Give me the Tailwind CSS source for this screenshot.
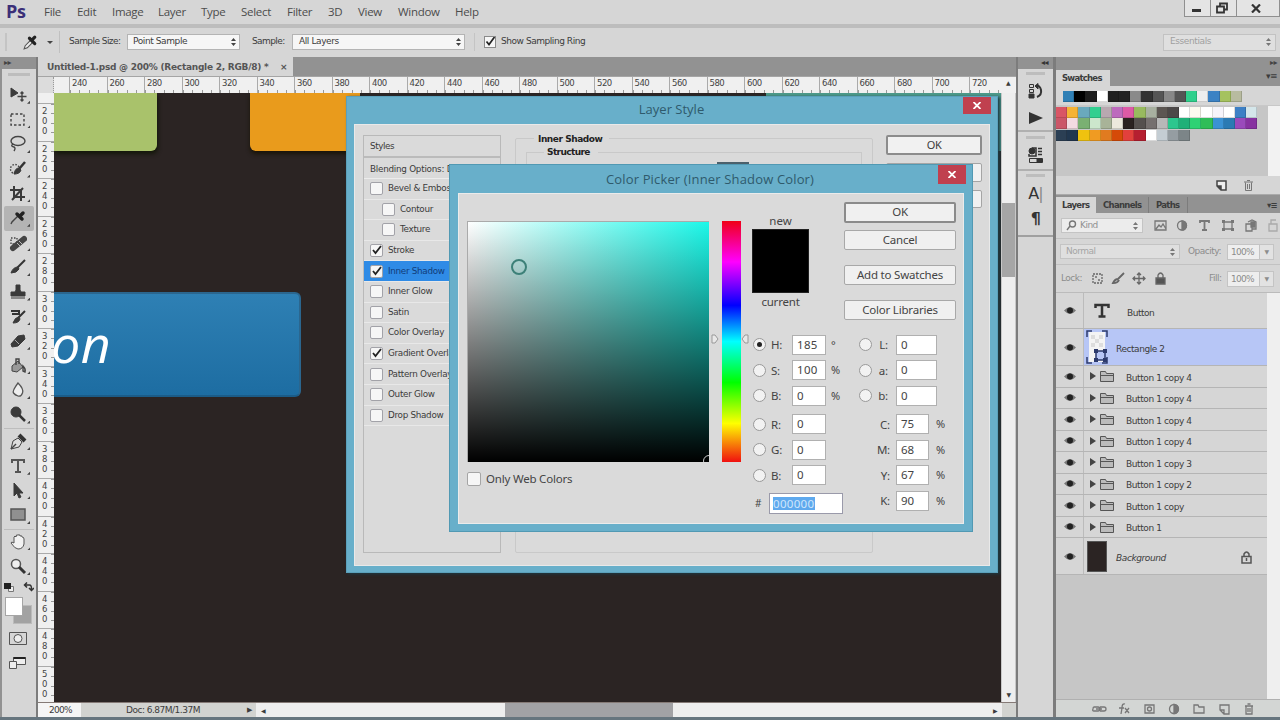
<!DOCTYPE html>
<html lang="en" class="h-full">
<head>
  <meta charset="UTF-8" />
  <title>Photoshop - Untitled-1.psd</title>
  <script src="https://cdn.jsdelivr.net/npm/@tailwindcss/browser@4"></script>
</head>
<body class="w-[1280px] h-[720px] overflow-hidden bg-[#d6d6d6] flex flex-col font-['DejaVu_Sans',sans-serif] text-[9px] tracking-[-0.5px] text-[#3c3c3c] whitespace-nowrap">

  <!-- Menu bar -->
  <header class="h-[28px] shrink-0 border-b-4 border-[#bdbdbd] flex">
    <div class="w-[44px] pl-[6px] font-['Open_Sans',sans-serif] text-[18px] font-bold leading-[22px] tracking-[-0.4px] text-[#3b2f78]">Ps</div>
    <nav class="flex font-['Open_Sans',sans-serif] text-[11.5px] tracking-[-0.3px] leading-[24px] text-[#4c4c4c]">
      <span class="w-[33px]">File</span>
      <span class="w-[35px]">Edit</span>
      <span class="w-[46px]">Image</span>
      <span class="w-[43px]">Layer</span>
      <span class="w-[40px]">Type</span>
      <span class="w-[46px]">Select</span>
      <span class="w-[41px]">Filter</span>
      <span class="w-[30px]">3D</span>
      <span class="w-[40px]">View</span>
      <span class="w-[57px]">Window</span>
      <span>Help</span>
    </nav>
    <div class="ml-auto w-[96px] h-[17px] flex border border-t-0 border-[#8f8f8f] bg-[#e4e4e4] text-[#333]">
      <div class="w-[26px] flex justify-center pt-[9px] pr-[3px] border-r border-[#8f8f8f]"><div class="w-[9px] h-[3px] bg-[#333]"></div></div>
      <div class="w-[26px] grid place-items-center pr-[3px] border-r border-[#8f8f8f]">
        <svg width="12" height="12" viewBox="0 0 12 12" fill="none" stroke="#333" stroke-width="1.8"><path d="M4 4V1.5h7v6H8M1 4.5h7v6H1z"/></svg>
      </div>
      <div class="flex-1 grid place-items-center pr-[4px]">
        <svg width="10" height="9" viewBox="0 0 10 9" stroke="#333" stroke-width="2.2"><path d="M1 .5l8 8M9 .5l-8 8"/></svg>
      </div>
    </div>
  </header>

  <!-- Options bar -->
  <div class="h-[29px] shrink-0 flex items-center pb-px text-[9px]">
    <div class="ml-[5px] w-[2px] h-[18px] bg-[#c4c4c4]"></div>
    <svg class="ml-[15px]" width="17" height="17" viewBox="0 0 16 16"><path d="M2 14l1-3 5-5 2 2-5 5z" fill="#eee" stroke="#555"/><path d="M7 4l5 5M9 6l3-3" stroke="#222" stroke-width="3" stroke-linecap="round"/></svg>
    <span class="ml-[8px] border-x-[3px] border-x-transparent border-t-[3px] border-t-[#444]"></span>
    <div class="ml-[6px] w-px h-[22px] bg-[#c0c0c0]"></div>
    <span class="ml-[9px] w-[58px] tracking-[-0.55px]">Sample Size:</span>
    <div class="w-[113px] h-[16px] bg-[#f6f6f6] border border-[#b4b4b4] flex items-center justify-between pl-[5px] pr-[3px]"><span class="tracking-[-0.4px]">Point Sample</span><svg width="5" height="8" viewBox="0 0 5 8" fill="#444"><path d="M0 3l2.500-3L5 3zM0 5l2.500 3L5 5z"/></svg></div>
    <span class="ml-[12px] w-[40px] tracking-[-0.6px]">Sample:</span>
    <div class="w-[173px] h-[16px] bg-[#f6f6f6] border border-[#b4b4b4] flex items-center justify-between pl-[6px] pr-[3px]"><span class="tracking-[-0.4px]">All Layers</span><svg width="5" height="8" viewBox="0 0 5 8" fill="#444"><path d="M0 3l2.500-3L5 3zM0 5l2.500 3L5 5z"/></svg></div>
    <div class="ml-[9px] w-px h-[18px] bg-[#c4c4c4]"></div>
    <div class="ml-[9px] w-[12px] h-[12px] bg-[#f6f6f6] border border-[#8a8a8a]"><svg width="11" height="10" viewBox="0 0 11 10" fill="none" stroke="#222" stroke-width="1.700"><path d="M1.500 4.500l2.500 3L9.500 0"/></svg></div>
    <span class="ml-[5px] tracking-[-0.45px]">Show Sampling Ring</span>
    <div class="ml-auto mr-[4px] w-[113px] h-[17px] bg-[#dfdfdf] border border-[#c2c2c2] flex items-center justify-between pl-[6px] pr-[4px] text-[#a0a0a0]"><span class="tracking-[-0.4px]">Essentials</span><svg width="5" height="8" viewBox="0 0 5 8" fill="#777"><path d="M0 3l2.500-3L5 3zM0 5l2.500 3L5 5z"/></svg></div>
  </div>

  <div class="h-[660px] shrink-0 flex bg-[#929292]">

    <!-- Toolbox -->
    <aside class="w-[38px] flex flex-col border-r-2 border-[#7c7c7c]">
      <div class="h-[12px] pl-[4px] text-[8px] leading-[11px] text-[#444]">▸▸</div>
      <div class="flex-1 ml-[2px] bg-[#d6d6d6] flex flex-col">
        <div class="mx-[6px] mt-[4px] h-[3px] bg-[#bdbdbd] shrink-0"></div>
        <div id="tools" class="mt-[7px] flex flex-col"></div>
        <div class="h-[15px] mt-[3px] flex justify-between px-[2px] shrink-0">
          <svg width="11" height="11" viewBox="0 0 11 11"><path d="M4.500 4.500h5v5h-5z" fill="#eee" stroke="#777"/><path d="M0 1h7v6H0z" fill="#222"/></svg>
          <svg width="11" height="10" viewBox="0 0 11 10" fill="none" stroke="#333" stroke-width="1.500"><path d="M2.500 3h4q2 0 2 4M4 .5L1.500 3 4 5.500M6 6l2.500 2.500L11 6"/></svg>
        </div>
        <div class="relative h-[31px] shrink-0">
          <div class="absolute left-[11px] top-[8px] w-[19px] h-[19px] bg-[#a2a2a2] border border-[#bbb]"></div>
          <div class="absolute left-[3px] top-0 w-[18px] h-[19px] bg-white border border-[#a5a5a5]"></div>
        </div>
        <div class="h-[22px] grid place-items-center pr-[3px]"><svg width="18" height="13" viewBox="0 0 18 13" fill="none" stroke="#555"><path d="M.5.5h17v12H.5z"/><circle cx="9" cy="6.500" r="4" fill="#eee"/></svg></div>
        <div class="h-[27px] grid place-items-center pr-[3px]"><svg width="19" height="14" viewBox="0 0 19 14" fill="#eee" stroke="#555"><path d="M5.500 1.500h12v7h-12z"/><path d="M5.500 2h12" stroke="#222" stroke-width="2"/><path d="M1.500 5.500h7v7h-7z"/></svg></div>
      </div>
    </aside>

    <!-- Document -->
    <main class="w-[978px] flex flex-col">
      <div class="h-[19px] shrink-0 flex">
        <div class="w-[255px] bg-[#d6d6d6] flex items-center pl-[9px] pt-[2px] font-bold text-[#555] text-[9px] tracking-[-0.25px]"><span class="w-[233px]">Untitled-1.psd @ 200% (Rectangle 2, RGB/8) *</span><span>×</span></div>
      </div>
      <div class="h-[17px] shrink-0 flex bg-[#f0f0f0] border-t border-[#a5a5a5]">
        <div class="w-[16px] bg-[#dcdcdc] border-r border-dotted border-[#999]"></div>
        <div id="ruler-x" class="w-[949px] flex overflow-hidden pl-[15px] text-[8.5px] leading-[13px] text-[#444]"></div>
        <div class="flex-1 pl-[3px] text-[6px] leading-[12px]">▲</div>
      </div>
      <div class="h-[609px] shrink-0 flex">
        <div id="ruler-y" class="w-[16px] bg-[#f0f0f0] overflow-hidden pt-[10px] text-[8.5px] leading-[10px] text-[#444]"></div>
        <section class="relative w-[947px] h-full bg-[#2b2423] overflow-hidden">
          <!-- Artwork on the canvas -->
          <div class="absolute left-0 top-0 w-[103px] h-[58px] rounded-br-[6px] bg-[#a9c26b] shadow-[1px_3px_4px_#14170a]"></div>
          <div class="absolute left-[196px] top-0 w-[110px] h-[58px] rounded-bl-[6px] bg-[#e99b1c] shadow-[0_3px_4px_#1a1408]"></div>
          <div class="absolute right-0 top-0 w-[235px] h-[58px] bg-[#4d9a8b]"></div>
          <div class="absolute left-[-10px] top-[199px] w-[257px] h-[105px] rounded-[6px] border-2 border-[#2b668e] border-b-[#1b5c88] bg-linear-to-b from-[#2e80b4] to-[#1d6da2] pl-[5px] font-['Open_Sans',sans-serif] italic text-[52px] leading-[97px] tracking-[0.5px] text-white">on</div>

          <!-- Layer Style dialog -->
          <div class="absolute left-[292px] top-[3px] w-[652px] h-[477px] bg-[#68afca] border border-[#5ba0bb] shadow-[2px_1px_3px_#1c3a44] px-[7px] pb-[6px] flex flex-col">
            <div class="h-[27px] shrink-0 flex">
              <h2 class="flex-1 pl-[26px] text-center font-['Open_Sans',sans-serif] text-[13px] leading-[24px] tracking-[0px] text-[#2f5a6c]">Layer Style</h2>
              <div class="w-[28px] h-[17px] mr-[-1px] bg-[#c0404f] grid place-items-center"><svg width="8" height="7" viewBox="0 0 8 7" stroke="#fff" stroke-width="1.800"><path d="M.5 0l7 7M7.500 0l-7 7"/></svg></div>
            </div>
            <div class="flex-1 bg-[#dadada] border border-[#e9e9e9] flex pl-[8px] pt-[10px] pb-[12px]">
              <div class="w-[138px] border border-[#b9b9b9] flex flex-col text-[8.8px] text-[#3a3a3a] tracking-[-0.4px]">
                <div class="h-[22px] shrink-0 pl-[6px] leading-[21px] border-b-2 border-[#bbb]">Styles</div>
                <div class="h-[21px] shrink-0 pl-[6px] leading-[22px] tracking-[-0.25px] border-b border-[#ececec]">Blending Options: Default</div>
                <div id="styles" class="flex flex-col"></div>
              </div>
              <div class="ml-[14px] w-[358px] mt-[3px] border border-[#c9c9c9] rounded-[2px] px-[10px]">
                <div class="w-[75px] -mt-[6px] ml-[8px] pl-[4px] bg-[#dadada] font-bold leading-[12px] tracking-[-0.45px] text-[#222]">Inner Shadow</div>
                <div class="mt-[7px] h-[120px] border border-[#c9c9c9]">
                  <div class="w-[54px] -mt-[7px] ml-[17px] pl-[3px] bg-[#dadada] font-bold leading-[12px] tracking-[-0.6px] text-[#222]">Structure</div>
                  <div class="ml-[190px] mt-[4px] w-[32px] h-[16px] bg-[#4b606b]"></div>
                </div>
              </div>
              <div class="ml-[13px] w-[96px] flex flex-col gap-[8px]">
                <div class="h-[20px] bg-[#f1f1f1] border-2 border-[#8c8c8c] rounded-[2px] text-center font-['Noto_Sans',sans-serif] text-[11px] leading-[15px] tracking-[-0.4px]">OK</div>
                <div class="h-[19px] bg-[#f1f1f1] border border-[#a5a5a5] rounded-[2px]"></div>
                <div class="h-[18px] bg-[#f1f1f1] border border-[#a5a5a5] rounded-[2px]"></div>
              </div>
            </div>
          </div>

          <!-- Color Picker dialog -->
          <div class="absolute left-[395px] top-[71px] w-[524px] h-[368px] bg-[#68afca] border border-[#5199b3] px-[8px] pb-[7px] flex flex-col">
            <div class="h-[28px] shrink-0 flex">
              <h2 class="flex-1 pl-[24px] text-center font-['Open_Sans',sans-serif] text-[13px] leading-[28px] tracking-[0.15px] text-[#2f5a6c]">Color Picker (Inner Shadow Color)</h2>
              <div class="w-[28px] h-[19px] mr-[-2px] bg-[#c0404f] grid place-items-center"><svg width="8" height="7" viewBox="0 0 8 7" stroke="#fff" stroke-width="1.800"><path d="M.5 0l7 7M7.500 0l-7 7"/></svg></div>
            </div>
            <div class="flex-1 bg-[#dadada] border border-[#ebebeb] flex font-['Noto_Sans',sans-serif] text-[11.5px] tracking-[-0.2px] text-[#444]">
              <div class="w-[250px] pl-[8px] pt-[27px]">
                <div class="relative w-[242px] h-[241px] border-l border-t border-[#aaa] overflow-hidden bg-[linear-gradient(to_top,#000,transparent),linear-gradient(to_right,#fff,#1cf7e8)]">
                  <svg class="absolute left-[42px] top-[36px]" width="18" height="18" viewBox="0 0 18 18" fill="none" stroke="#3d8078" stroke-width="2"><circle cx="9" cy="9" r="7"/></svg>
                  <div class="absolute left-[235px] top-[233px] w-[12px] h-[12px] rounded-full border border-[#ccc]"></div>
                </div>
                <div class="mt-[9px] flex items-center"><div class="w-[14px] h-[14px] border border-[#a5a5a5] rounded-[2px] bg-[#f6f6f6]"></div><span class="ml-[5px] leading-[16px] tracking-[-0.2px]">Only Web Colors</span></div>
              </div>
              <div class="w-[36px] pt-[27px] relative">
                <div class="ml-[13px] w-[19px] h-[241px] bg-[linear-gradient(to_bottom,#f00016,#f0f_17%,#00f_35%,#0ff_50%,#0f0_67%,#ff0_84%,#f01010)]"></div>
                <svg class="absolute left-[2px] top-[140px]" width="38" height="10" viewBox="0 0 38 10" fill="#e8e8e8" stroke="#999"><path d="M1 1h3l3 4-3 4H1zM37 1h-3l-3 4 3 4h3z"/></svg>
              </div>
              <div class="w-[88px] pt-[19px] flex flex-col">
                <div class="w-[57px] ml-[7px] flex flex-col items-center">
                  <span class="leading-[16px] h-[16px] tracking-[0px]">new</span>
                  <div class="w-[57px] h-[64px] bg-black border border-[#222]"></div>
                  <span class="leading-[18px] tracking-[-0.2px]">current</span>
                </div>
                <div id="hsb" class="ml-[8px] mt-[21px]"></div>
                <div class="flex items-center mt-[5px] ml-[8px]"><span class="w-[9px] shrink-0 mr-[7px] pl-[2px] text-[10px]">#</span>
                  <div class="w-[74px] shrink-0 h-[21px] bg-white border border-[#9a9aaa] p-[3px]"><div class="w-[42px] h-[13px] bg-[#5ea9ee] text-[#cfe6fb] leading-[13px] tracking-[0.3px]">000000</div></div>
                </div>
              </div>
              <div class="w-[123px] pt-[8px] flex flex-col">
                <div class="ml-[11px] w-[112px] text-center leading-[17px] tracking-[-0.2px]">
                  <div class="h-[21px] bg-[#f0f0f0] border-2 border-[#8b8b8b] rounded-[2px] leading-[16px]">OK</div>
                  <div class="mt-[7px] h-[20px] bg-[#f0f0f0] border border-[#a8a8a8] rounded-[2px]">Cancel</div>
                  <div class="mt-[15px] h-[20px] bg-[#f0f0f0] border border-[#a8a8a8] rounded-[2px]">Add to Swatches</div>
                  <div class="mt-[15px] h-[20px] bg-[#f0f0f0] border border-[#a8a8a8] rounded-[2px]">Color Libraries</div>
                </div>
                <div id="lab" class="ml-[26px] mt-[12px]"></div>
              </div>
            </div>
          </div>
        </section>
        <div class="flex-1 bg-[#eeeeee] border-x border-[#c8c8c8] flex flex-col">
          <div class="mt-[110px] h-[74px] bg-[#a6a6a6]"></div>
          <div class="mt-auto text-center text-[6px] leading-[14px]">▼</div>
        </div>
      </div>
      <div class="flex-1 border-t border-[#857a76] bg-[#d2d3d0] flex items-center leading-[15px]">
        <div class="w-[43px] h-full bg-[#f5f5f5] pl-[11px] tracking-[-0.7px]">200%</div>
        <div class="w-[166px] pl-[45px] tracking-[-0.5px]">Doc: 6.87M/1.37M</div>
        <span class="w-[9px] text-[7px]">▶</span>
        <div class="w-[746px] h-full bg-[#eee] flex items-center justify-between px-[5px] text-[6px]"><span>◀</span><div class="w-[168px] h-full bg-[#a2a2a5] mr-[84px] ml-auto"></div><span class="ml-[236px]">▶</span></div>
      </div>
    </main>

    <!-- Collapsed panel strip -->
    <aside class="w-[40px] flex flex-col border-x-2 border-r-3 border-[#7c7c7c] text-[#333]">
      <div class="h-[12px] text-[8px] leading-[11px] text-right pr-[5px] shrink-0">◂◂</div>
      <div class="h-[63px] shrink-0 bg-[#d6d6d6] border-b-2 border-[#b0b0b0] flex flex-col items-center">
        <div class="w-[19px] h-[3px] mt-[3px] bg-[#bdbdbd]"></div>
        <svg class="mt-[8px]" width="16" height="16" viewBox="0 0 16 16" fill="none" stroke="#333"><path d="M1.500 1.500h4v3h-4zM1.500 6.500h4v3h-4z"/><path d="M1 11h5v4H1z" fill="#333"/><path d="M9 14q5-2 4-7t-5-4" stroke-width="2"/><path d="M10 .5L7 3l3 3z" fill="#333"/></svg>
        <svg class="mt-[13px]" width="14" height="12" viewBox="0 0 14 12"><path d="M0 0l14 6-14 6z" fill="#333"/></svg>
      </div>
      <div class="h-[39px] shrink-0 bg-[#d6d6d6] border-b-2 border-[#b0b0b0] flex flex-col items-center">
        <div class="w-[19px] h-[3px] mt-[4px] bg-[#bdbdbd]"></div>
        <svg class="mt-[8px]" width="16" height="17" viewBox="0 0 16 17" fill="none" stroke="#333"><circle cx="4" cy="4" r="3" fill="#333"/><path d="M4 1h4v8H1V7M10 1.500h4M10 4.500h4M10 7.500h4" stroke-width="1.500"/><path d="M1.500 11.500h13v4h-13z"/><path d="M9 12h5v3H9z" fill="#333"/></svg>
      </div>
      <div class="h-[66px] shrink-0 bg-[#d6d6d6] border-b-2 border-[#a0a0a0] flex flex-col items-center">
        <div class="w-[19px] h-[3px] mt-[3px] bg-[#bdbdbd]"></div>
        <div class="mt-[6px] h-[24px] text-[16px] leading-[22px] tracking-[-1px]">A<span class="text-[#888]">|</span></div>
        <div class="text-[16px] leading-[24px] font-bold">¶</div>
      </div>
      <div class="flex-1 bg-[#d6d6d6]"></div>
    </aside>

    <!-- Panels -->
    <aside class="w-[224px] flex flex-col">
      <div class="h-[13px] text-[8px] leading-[11px] text-right pr-[3px] text-[#444] shrink-0">▸▸</div>
      <div class="h-[16px] shrink-0 flex justify-between">
        <span class="w-[54px] bg-[#d6d6d6] pl-[6px] leading-[16px] font-bold text-[8.5px] tracking-[-0.75px]">Swatches</span>
        <span class="pr-[3px] leading-[13px] text-[9px]">▾≡</span>
      </div>
      <div class="h-[20px] shrink-0 bg-[#d6d6d6] pl-[7px] pt-[5px] flex border-b border-[#c8c8c8]" id="recent"></div>
      <div class="h-[70px] shrink-0 flex bg-[#c6c6c6]">
        <div id="swatches" class="flex-1 pt-[1px]"></div>
        <div class="w-[12px] bg-[#f2f2f2]"></div>
      </div>
      <div class="h-[19px] shrink-0 bg-[#d6d6d6] flex items-center justify-end gap-[17px] pr-[27px] border-b border-[#aaa]">
        <svg width="11" height="11" viewBox="0 0 11 11" fill="#eee" stroke="#444" stroke-width="1.500"><path d="M1 1h9v9H5L1 6z"/><path d="M1 6h4v4" fill="#444"/></svg>
        <svg width="9" height="11" viewBox="0 0 9 11" fill="none" stroke="#777"><path d="M0 2h9M3 .5h3M1.500 2.500v8h6v-8M3.500 4v5M5.500 4v5"/></svg>
      </div>
      <div class="h-[18px] pt-[2px] shrink-0 flex font-bold text-[8.500px] leading-[16px] tracking-[-0.7px]">
        <span class="w-[40px] bg-[#d6d6d6] pl-[6px]">Layers</span>
        <span class="w-[53px] pl-[7px] border-r border-[#7c7c7c]">Channels</span>
        <span class="w-[39px] pl-[7px] border-r border-[#7c7c7c]">Paths</span>
        <span class="ml-auto pr-[3px]">▾≡</span>
      </div>
      <div class="h-[26px] shrink-0 bg-[#d6d6d6] border-b border-[#c2c2c2] flex items-center pl-[5px] text-[#909090]">
        <div class="w-[82px] h-[15px] bg-[#ececec] border border-[#c4c4c4] flex items-center px-[4px]">
          <svg width="11" height="11" viewBox="0 0 11 11" fill="none" stroke="#777" stroke-width="1.400"><circle cx="6.500" cy="4" r="3"/><path d="M4 6L1 10"/></svg>
          <span class="ml-[3px]">Kind</span><svg class="ml-auto" width="5" height="8" viewBox="0 0 5 8" fill="#777"><path d="M0 3l2.500-3L5 3zM0 5l2.500 3L5 5z"/></svg>
        </div>
        <svg class="ml-[11px]" width="125" height="13" viewBox="0 0 125 13" fill="none" stroke="#777" stroke-width="1.300">
          <path d="M1 2h11v9H1zM2 10l3-4 2 2 2-3 3 5"/><circle cx="28" cy="6.500" r="4.500"/><path d="M28 2a4.500 4.500 0 0 1 0 9z" fill="#777"/>
          <path d="M46 4V2h9v2M50.500 2v9M48 11h5" stroke-width="1.800"/><path d="M70 3h8v7h-8z"/><path d="M68 1h3v3h-3zM77 1h3v3h-3zM68 9h3v3h-3zM77 9h3v3h-3z" fill="#777" stroke="none"/>
          <path d="M92 5h6v7h-6zM94 3l4-2 4 2v7h-4"/><path d="M97 3h4v5h-4z" fill="#777"/><path d="M115 5h8v7h-8zM117 5V1h5" stroke="#aaa"/>
        </svg>
      </div>
      <div class="h-[26px] shrink-0 bg-[#d6d6d6] border-b border-[#c2c2c2] flex items-center pl-[4px] text-[#8c8c8c]">
        <div class="w-[120px] h-[15px] bg-[#dfdfdf] border border-[#c4c4c4] flex items-center justify-between pl-[5px] pr-[4px] text-[#a5a5a5]"><span>Normal</span><svg width="5" height="8" viewBox="0 0 5 8" fill="#777"><path d="M0 3l2.500-3L5 3zM0 5l2.500 3L5 5z"/></svg></div>
        <span class="w-[39px] ml-[8px]">Opacity:</span>
        <div class="w-[33px] h-[16px] bg-[#eee] border border-[#c4c4c4] pl-[3px] leading-[14px] tracking-[-0.7px]">100%</div>
        <div class="w-[14px] h-[16px] bg-[#e2e2e2] border border-l-0 border-[#c4c4c4] grid place-items-center text-[6px]">▼</div>
      </div>
      <div class="h-[28px] shrink-0 bg-[#d6d6d6] border-b border-[#bbb] flex items-center pl-[5px] text-[#8c8c8c]">
        <span class="w-[30px]">Lock:</span>
        <svg width="75" height="13" viewBox="0 0 75 13" fill="none" stroke="#666" stroke-width="1.300"><path d="M2 2h9v9H2z" stroke-dasharray="2 1"/><path d="M4 4h2v2H4zM7 7h2v2H7z" fill="#888" stroke="none"/><path d="M33 1l-7 7M27 7q-3 0-5 4 5 0 6-3" stroke-width="1.800"/><path d="M48 1v11M42 6.500h12M46 3l2-2 2 2M46 10l2 2 2-2M44 4.500l-2 2 2 2M52 4.500l2 2-2 2"/><path d="M65 6h9v6h-9z" fill="#555"/><path d="M67 6V3q2.500-4 5 0v3"/></svg>
        <span class="w-[18px] ml-auto">Fill:</span>
        <div class="w-[33px] h-[16px] bg-[#eee] border border-[#c4c4c4] pl-[3px] leading-[14px] tracking-[-0.7px]">100%</div>
        <div class="w-[14px] h-[16px] mr-[6px] bg-[#e2e2e2] border border-l-0 border-[#c4c4c4] grid place-items-center text-[6px]">▼</div>
      </div>
      <div class="h-[407px] shrink-0 flex bg-[#c6c6c6] border-b border-[#b0b0b0]">
        <div id="layers" class="w-[211px] flex flex-col"></div>
        <div class="flex-1 bg-[#efefef]"></div>
      </div>
      <div class="flex-1 bg-[#d3d6d4] flex items-center justify-center pl-[9px]">
        <svg width="162" height="12" viewBox="0 0 162 12" fill="none" stroke="#777" stroke-width="1.300">
          <path d="M2 4h4q2 0 2 2t-2 2H2q-2 0-1-2 0-2 1-2zM8 4h4q2 0 2 2t-2 2H8M4 6h6"/>
          <path d="M33 1q-3-1-3 4l-1 6M27 5h5M33 5l4 5M37 5l-4 5"/>
          <path d="M53 2h9v8h-9z"/><circle cx="57.500" cy="6" r="2"/>
          <circle cx="82" cy="6" r="4.500"/><path d="M82 1.500a4.500 4.500 0 0 1 0 9z" fill="#777"/>
          <path d="M102 10V2h4l1 2h5v6z"/><path d="M128 2h9v9h-5l-4-4zM128 7h4v4"/>
          <path d="M153 3h8M155.500 1h3M154 3v8h6V3M156 5v4M158 5v4"/>
        </svg>
      </div>
    </aside>
  </div>

  <footer class="flex-1 bg-[#66757e]"></footer>

  <script>
    const dark = 'fill="#3a3a3a" stroke="#3a3a3a"';
    const line = 'fill="none" stroke="#444" stroke-width="1.4"';
    const tools = [
      `<path d="M2 2l7 5-7 4z" ${dark}/><path d="M13 6v9M8.500 10.500h9M11.500 7.500L13 6l1.500 1.500M11.500 13.500L13 15l1.500-1.500" ${line}/>`,
      `<path d="M2 3h13v11H2z" ${line} stroke-dasharray="2.500 2"/>`,
      `<ellipse cx="9" cy="6" rx="7" ry="4.500" ${line}/><path d="M4 9q-3 2 1 3 2 1 0 4" ${line}/>`,
      `<circle cx="6" cy="9" r="4.500" ${line} stroke-dasharray="1.500 1.500"/><path d="M16 2l-6 7" fill="none" stroke="#333" stroke-width="2.500"/><path d="M10 8q-4 0-5 6 6 0 7-4z" ${dark}/>`,
      `<path d="M5 1v11h11M1 5h11v11M3 15L14 3" fill="none" stroke="#3a3a3a" stroke-width="2"/>`,
      `<path d="M2 15l1-2 6-6" ${line}/><path d="M8 5l5 5M11 7l3-3" stroke="#222" stroke-width="3.500" stroke-linecap="round"/>`,
      `<path d="M2 4h6v6H2z" ${line} stroke-dasharray="1.500 1.500"/><path d="M4 14L15 5" stroke="#444" stroke-width="6" stroke-linecap="round"/><path d="M8 9l3 3M10 7l3 3" stroke="#bbb"/>`,
      `<path d="M16 2l-8 8" fill="none" stroke="#333" stroke-width="2"/><path d="M9 9q-5 0-7 6 6 0 8-4z" ${dark}/>`,
      `<path d="M7 2h4v5l1 2h4v4H2V9h4l1-2zM2 15h14" ${dark}/>`,
      `<path d="M2 3h8v3H3M16 3l-7 7" fill="none" stroke="#333" stroke-width="2"/><path d="M10 9q-4 0-6 6 6 0 7-4z" ${dark}/>`,
      `<path d="M2 12l7-8 6-1 1 4-7 7-6 1z" ${dark}/><path d="M6 8l4 4" stroke="#aaa"/>`,
      `<path d="M3 9l6-5 5 6-6 5-5-1z" fill="#999" stroke="#444"/><path d="M7 8V2h3v5M14 9q3 3 2 6l-2-1z" ${line}/>`,
      `<path d="M9 2q6 6 4.500 10T9 15t-4.500-3T9 2z" fill="#eee" stroke="#555" stroke-width="1.300"/>`,
      `<circle cx="7" cy="6" r="5" ${dark}/><path d="M10 9l6 6" fill="none" stroke="#333" stroke-width="2.500"/>`,
      null,
      `<path d="M2 16l2-8 5-3 4 4-3 5z" fill="#ddd" stroke="#444"/><path d="M2 16l5-5" ${line}/><path d="M10 2l6 6" stroke="#333" stroke-width="4"/>`,
      `<path d="M3 6V3h12v3M9 3v12M6 15h6" fill="none" stroke="#555" stroke-width="2"/>`,
      `<path d="M5 1v13l3-3 2 5 2-1-2-4h4z" ${dark}/>`,
      `<path d="M2 3h14v11H2z" fill="#909090" stroke="#555" stroke-width="1.500"/>`,
      null,
      `<path d="M5 9V4q1-2 2 0 0-3 2-2 2-1 2 1 2-1 2 1 2 0 2 2v5q-1 5-6 5-3 0-7-6 0-2 3 0z" fill="#f2f2f2" stroke="#555"/>`,
      `<circle cx="7" cy="6" r="4.500" fill="#eee" stroke="#555" stroke-width="1.500"/><path d="M10 9l6 6" fill="none" stroke="#333" stroke-width="3"/>`,
    ];
    document.getElementById('tools').innerHTML = tools.map((icon, i) => {
      if (!icon) return '<div class="h-px mt-px shrink-0 bg-[#bdbdbd] mx-[2px]"></div>';
      const box = i === 5 ? 'bg-[#b4b4b4]' : '';
      return `<div class="h-[24.6px] shrink-0 mx-[2px] rounded-[2px] flex items-center pl-[5px] ${box}">
        <svg width="18" height="18" viewBox="0 0 18 18">${icon}</svg>
        <span class="mt-[14px] w-[3px] h-[3px] bg-[#444] [clip-path:polygon(100%_0,100%_100%,0_100%)]"></span></div>`;
    }).join('');

    // Rulers: one numbered cell every 20 units
    let rx = '', ry = '';
    for (let n = 240; n <= 720; n += 20) {
      rx += `<div class="w-[37.5px] shrink-0 h-full border-l border-[#aaa] pl-[2px] relative">${n}<div class="absolute left-0 bottom-0 w-full h-[3px] bg-[repeating-linear-gradient(to_right,#999_0,#999_1px,transparent_1px,transparent_9.4px)]"></div></div>`;
    }
    for (let n = 200; n <= 500; n += 20) {
      ry += `<div class="h-[37.5px] border-t border-[#aaa] pl-[4px] pt-[2px] relative">${String(n).split('').join('<br>')}<div class="absolute right-0 top-0 w-[3px] h-full bg-[repeating-linear-gradient(to_bottom,#999_0,#999_1px,transparent_1px,transparent_9.4px)]"></div></div>`;
    }
    document.getElementById('ruler-x').innerHTML = rx;
    document.getElementById('ruler-y').innerHTML = ry;

    const check = '<svg width="12" height="11" viewBox="0 0 12 11" fill="none" stroke="#222" stroke-width="1.8"><path d="M2 5l2.500 3L10 1"/></svg>';
    const styles = [
      ['Bevel & Emboss', 0, 0], ['Contour', 1, 0], ['Texture', 1, 0], ['Stroke', 0, 1], ['Inner Shadow', 0, 1],
      ['Inner Glow', 0, 0], ['Satin', 0, 0], ['Color Overlay', 0, 0], ['Gradient Overlay', 0, 1],
      ['Pattern Overlay', 0, 0], ['Outer Glow', 0, 0], ['Drop Shadow', 0, 0],
    ];
    document.getElementById('styles').innerHTML = styles.map(([name, sub, on]) => `
      <div class="h-[20.6px] flex items-center border-b border-[#e8e8e8] ${sub ? 'pl-[18px]' : 'pl-[6px]'} ${name === 'Inner Shadow' ? 'bg-[#2f8be6] text-[#123c78]' : ''}">
        <div class="w-[13px] h-[13px] shrink-0 bg-[#f6f6f6] border border-[#a2a2a8] rounded-[2px]">${on ? check : ''}</div>
        <span class="ml-[5px] tracking-[-0.3px]">${name}</span>
      </div>`).join('');

    function radio(on) {
      return `<div class="w-[13px] h-[13px] shrink-0 rounded-full border border-[#999] bg-[#f2f2f2] grid place-items-center">${on ? '<div class="w-[5px] h-[5px] rounded-full bg-[#222]"></div>' : ''}</div>`;
    }
    const hsb = [['H', 185, '°'], ['S', 100, '%'], ['B', 0, '%'], ['R', 0, ''], ['G', 0, ''], ['B', 0, '']];
    document.getElementById('hsb').innerHTML = hsb.map(([k, v, unit], i) => `
      <div class="h-[25.5px] flex items-center ${i === 3 ? 'mt-[3px]' : ''}">${radio(i === 0)}
        <span class="w-[20px] ml-[5px] mr-px shrink-0">${k}:</span>
        <div class="w-[34px] h-[20px] shrink-0 bg-white border border-[#b0b0b0] pl-[4px] leading-[18px] tracking-[0.3px]">${v}</div>
        <span class="ml-[5px] text-[11px]">${unit}</span></div>`).join('');

    const lab = [['L', 0], ['a', 0], ['b', 0], ['C', 75], ['M', 68], ['Y', 67], ['K', 90]];
    document.getElementById('lab').innerHTML = lab.map(([k, v], i) => `
      <div class="h-[25.5px] flex items-center ${i === 3 ? 'mt-[3px]' : ''}">${i < 3 ? radio(false) : '<div class="w-[13px] shrink-0"></div>'}
        <span class="${i < 3 ? 'w-[16px] mr-[2px]' : 'w-[18px]'} shrink-0 text-right">${k}:</span>
        <div class="${i < 3 ? 'w-[41px]' : 'w-[33px]'} h-[20px] ml-[6px] shrink-0 bg-white border border-[#b0b0b0] pl-[4px] leading-[18px] tracking-[-0.1px]">${v}</div>
        <span class="ml-[7px] text-[11px]">${i < 3 ? '' : '%'}</span></div>`).join('');

    function swatchRow(colors) {
      return colors.split(' ').map(c => `<div class="w-[11.2px] h-[11px] shrink-0 border-r border-b border-black/15" style="background:#${c}"></div>`).join('');
    }
    document.getElementById('recent').innerHTML = swatchRow('2f7fb5 000 1c1c1c fff 1f1f1f 222 8a8a8a 333 555 888 555 2fd08c eee 3c82c4 a5c25f b8bba0');
    document.getElementById('swatches').innerHTML = [
      'd95565 f5b335 6aa9bd 32cf8f b8a8b0 bd6abd dd5aa6 98ba5f a8b0a0 5c5652 4c4848 fff fdfbf0 fff f6f4fa fff 3d80c5 d4e6ea',
      'cb5668 f3dbe2 7ab072 cce6cc a8b398 ece9dc 2a2220 55504e 76706f b8b8b8 2cc78e 1fb078 2fd274 2fbd58 3a92d4 2a7ab3 9a4abb 8732a0',
      '2b3f54 21374f efc20f f09b22 e07b20 d54a08 e2403c b61f30 fff c4cdd3 959da2 7c8588',
    ].map(r => `<div class="flex h-[11.3px]">${swatchRow(r)}</div>`).join('');

    const eye = '<div class="w-[28px] h-full shrink-0 grid place-items-center border-r border-[#bbb]"><svg width="12" height="9" viewBox="0 0 12 9"><path d="M0 4.500q6-7 12 0-6 7-12 0z" fill="#777"/><circle cx="6" cy="4.500" r="3" fill="#222"/></svg></div>';
    const groups = ['Button 1 copy 4', 'Button 1 copy 4', 'Button 1 copy 4', 'Button 1 copy 4', 'Button 1 copy 3', 'Button 1 copy 2', 'Button 1 copy', 'Button 1'];
    document.getElementById('layers').innerHTML = `
      <div class="h-[36px] shrink-0 flex items-center bg-[#d6d6d6] border-b border-[#b5b5b5]">${eye}
        <svg class="ml-[10px]" width="16" height="15" viewBox="0 0 16 15" fill="none" stroke="#333" stroke-width="2.500"><path d="M1.500 5V2h13v3M8 2v12M4.500 13.500h7"/></svg>
        <span class="ml-[17px] mt-[6px]">Button</span></div>
      <div class="h-[37px] shrink-0 flex items-center bg-[#d6d6d6] border-b border-[#b5b5b5]">${eye}
        <div class="flex-1 h-full bg-[#b7c6f6] flex items-center">
          <svg class="ml-[2px]" width="22" height="34" viewBox="0 0 22 34" fill="none" stroke="#2d3a6c" stroke-width="1.500"><path d="M3 2h16v30H3z" fill="#f4f4f4" stroke="none"/><path d="M5 5h4v4H5zM13 5h4v4h-4zM9 9h4v4H9zM5 13h4v4H5zM13 13h4v4h-4z" fill="#ddd" stroke="none"/><path d="M1 7V1h5M16 1h5v6M1 27v6h5M21 27v6h-5"/><path d="M10 21h9v9h-9z" fill="#b7c6f6"/><path d="M8 19h4v4H8zM17 19h4v4h-4zM8 28h4v4H8zM17 28h4v4h-4z" fill="#2d3a6c" stroke="none"/></svg>
          <span class="ml-[8px] mt-[5px] tracking-[-0.45px]">Rectangle 2</span>
        </div></div>
      ${groups.map(g => `<div class="h-[21.5px] shrink-0 flex items-center bg-[#d6d6d6] border-b border-[#b5b5b5]">${eye}
        <svg class="ml-[6px]" width="6" height="8" viewBox="0 0 6 8"><path d="M0 0l6 4-6 4z" fill="#444"/></svg>
        <svg class="ml-[4px] mt-[1px]" width="14" height="11" viewBox="0 0 14 11" fill="#bbb" stroke="#555"><path d="M.5 10.500v-10h5l1 2h7v8zM.5 4.500h13"/></svg>
        <span class="ml-[12px] mt-[4px] tracking-[-0.4px]">${g}</span></div>`).join('')}
      <div class="h-[37px] shrink-0 flex items-center bg-[#d6d6d6] border-b border-[#b5b5b5]">${eye}
        <div class="ml-[3px] w-[20px] h-[31px] bg-[#2b2423] border border-[#555]"></div>
        <span class="ml-[9px] mt-[5px] italic tracking-[-0.4px]">Background</span>
        <svg class="ml-auto mr-[15px] mt-[2px]" width="11" height="13" viewBox="0 0 11 13" fill="none" stroke="#555" stroke-width="1.500"><path d="M1 5.500h9V12H1z"/><path d="M3 5V3q2.500-4 5 0v2M5.500 7v3"/></svg></div>`;
  </script>
</body>
</html>
